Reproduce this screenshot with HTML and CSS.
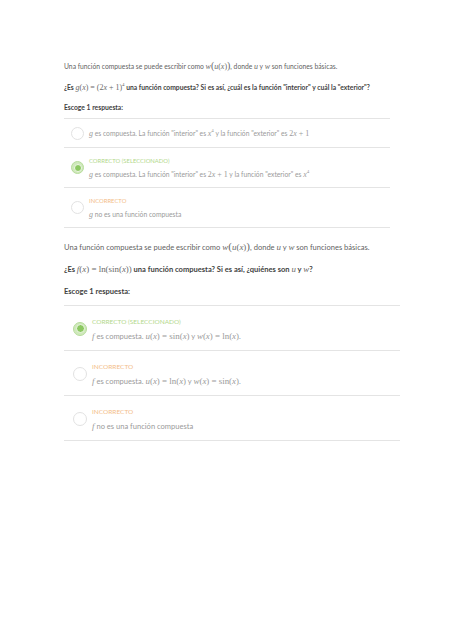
FILE: index.html
```html
<!DOCTYPE html>
<html lang="es">
<head>
<meta charset="utf-8">
<title>Funciones compuestas</title>
<link rel="stylesheet" href="styles.css">
</head>
<body>
<main class="page">
  <section class="exercise ex1">
    <p class="intro">Una función compuesta se puede escribir como <span class="m"><i>w</i><span class="big">(</span><i>u</i>(<i>x</i>)<span class="big">)</span></span>, donde <span class="m"><i>u</i></span> y <span class="m"><i>w</i></span> son funciones básicas.</p>
    <p class="question">¿Es <span class="m"><i>g</i>(<i>x</i>) = (2<i>x</i> + 1)<sup>4</sup></span> una función compuesta? Si es así, ¿cuál es la función "interior" y cuál la "exterior"?</p>
    <p class="prompt">Escoge 1 respuesta:</p>
    <ul class="choices">
      <li class="choice">
        <span class="radio"></span>
        <div class="body">
          <div class="text"><span class="m"><i>g</i></span> es compuesta. La función "interior" es <span class="m"><i>x</i><sup>4</sup></span> y la función "exterior" es <span class="m">2<i>x</i> + 1</span></div>
        </div>
      </li>
      <li class="choice">
        <span class="radio selected"><span class="dot"></span></span>
        <div class="body">
          <div class="label correct">CORRECTO (SELECCIONADO)</div>
          <div class="text"><span class="m"><i>g</i></span> es compuesta. La función "interior" es <span class="m">2<i>x</i> + 1</span> y la función "exterior" es <span class="m"><i>x</i><sup>4</sup></span></div>
        </div>
      </li>
      <li class="choice">
        <span class="radio"></span>
        <div class="body">
          <div class="label wrong">INCORRECTO</div>
          <div class="text"><span class="m"><i>g</i></span> no es una función compuesta</div>
        </div>
      </li>
    </ul>
  </section>

  <section class="exercise ex2">
    <p class="intro">Una función compuesta se puede escribir como <span class="m"><i>w</i><span class="big">(</span><i>u</i>(<i>x</i>)<span class="big">)</span></span>, donde <span class="m"><i>u</i></span> y <span class="m"><i>w</i></span> son funciones básicas.</p>
    <p class="question">¿Es <span class="m"><i>f</i>(<i>x</i>) = ln(sin(<i>x</i>))</span> una función compuesta? Si es así, ¿quiénes son <span class="m"><i>u</i></span> y <span class="m"><i>w</i></span>?</p>
    <p class="prompt">Escoge 1 respuesta:</p>
    <ul class="choices">
      <li class="choice">
        <span class="radio selected"><span class="dot"></span></span>
        <div class="body">
          <div class="label correct">CORRECTO (SELECCIONADO)</div>
          <div class="text"><span class="m"><i>f</i></span> es compuesta. <span class="m"><i>u</i>(<i>x</i>) = sin(<i>x</i>)</span> y <span class="m"><i>w</i>(<i>x</i>) = ln(<i>x</i>)</span>.</div>
        </div>
      </li>
      <li class="choice">
        <span class="radio"></span>
        <div class="body">
          <div class="label wrong">INCORRECTO</div>
          <div class="text"><span class="m"><i>f</i></span> es compuesta. <span class="m"><i>u</i>(<i>x</i>) = ln(<i>x</i>)</span> y <span class="m"><i>w</i>(<i>x</i>) = sin(<i>x</i>)</span>.</div>
        </div>
      </li>
      <li class="choice">
        <span class="radio"></span>
        <div class="body">
          <div class="label wrong">INCORRECTO</div>
          <div class="text"><span class="m"><i>f</i></span> no es una función compuesta</div>
        </div>
      </li>
    </ul>
  </section>
</main>
</body>
</html>
```

FILE: styles.css
```css
html, body {
  margin: 0;
  padding: 0;
  background: #ffffff;
}

body {
  font-family: Lato, "Open Sans", "Liberation Sans", sans-serif;
  color: #5f5f5f;
}

.page {
  padding: 61px 0 0 64px;
}

.exercise p {
  margin: 0;
}

.m {
  font-family: "Liberation Serif", "DejaVu Serif", serif;
  font-size: 1.18em;
  color: #6a6a6a;
  font-weight: 400;
  white-space: nowrap;
}

.m i {
  font-style: italic;
}

.m sup {
  font-size: 0.62em;
  line-height: 0;
  vertical-align: 0.75em;
}

.big {
  font-size: 1.25em;
  line-height: 0;
}

.question, .prompt {
  font-weight: 700;
  color: #3f3f3f;
}

.choices {
  list-style: none;
  margin: 0;
  padding: 0;
  border-top: 1.5px solid #e4e4e4;
}

.choice {
  display: flex;
  align-items: center;
  border-bottom: 1.5px solid #e4e4e4;
}

.radio {
  flex: none;
  box-sizing: border-box;
  border-radius: 50%;
  border: 1px solid #e2e2e2;
  background: #ffffff;
  display: flex;
  align-items: center;
  justify-content: center;
}

.radio.selected {
  border-color: #b7dc9c;
  background: #cfe9bb;
}

.dot {
  box-sizing: border-box;
  border-radius: 50%;
  background: #8cc862;
  border: 1px solid #eef7e6;
}

.body {
  display: flex;
  flex-direction: column;
}

.text {
  color: #9a9a9a;
}

.text .m {
  color: #9a9a9a;
}

.label.correct {
  color: #b2d88b;
}

.label.wrong {
  color: #f3bd88;
}

/* ---- exercise 1 (smaller) ---- */
.ex1 {
  width: 326px;
  font-size: 6.75px;
  line-height: 10px;
}

.ex1 .question {
  margin-top: 10px;
}

.ex1 .prompt {
  margin-top: 8.5px;
}

.ex1 .choices {
  margin-top: 6px;
}

.ex1 .choice {
  padding: 8px 0 7.5px;
}

.ex1 .radio {
  width: 13px;
  height: 13px;
  margin-left: 7px;
  margin-right: 5px;
}

.ex1 .dot {
  width: 8px;
  height: 8px;
}

.ex1 .label {
  font-size: 5.9px;
  margin-bottom: 2.5px;
}

/* ---- exercise 2 (larger) ---- */
.ex2 {
  width: 336px;
  font-size: 7.55px;
  line-height: 11px;
  margin-top: 14px;
}

.ex2 .question {
  margin-top: 11px;
}

.ex2 .prompt {
  margin-top: 11px;
}

.ex2 .choices {
  margin-top: 8px;
}

.ex2 .choice {
  padding: 9.5px 0 8.5px;
}

.ex2 .radio {
  width: 14px;
  height: 14px;
  margin-left: 9px;
  margin-right: 5px;
}

.ex2 .dot {
  width: 9px;
  height: 9px;
}

.ex2 .label {
  font-size: 6.5px;
  margin-bottom: 4px;
}
```
